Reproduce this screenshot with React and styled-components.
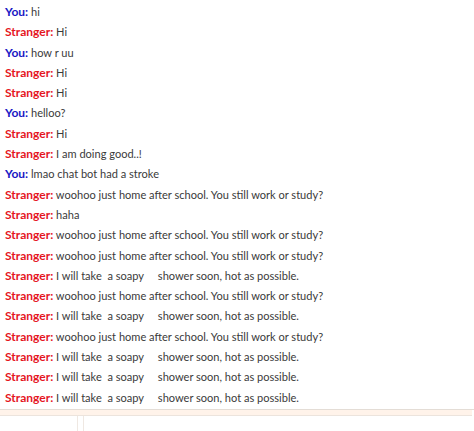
import React from 'react';
import styled, { createGlobalStyle } from 'styled-components';

const GlobalStyle = createGlobalStyle`
  html, body {
    margin: 0;
    padding: 0;
    background: #fff;
  }
  body {
    font-family: Lato, 'Noto Sans', sans-serif;
  }
`;

const Page = styled.div`
  width: 474px;
  height: 431px;
  display: flex;
  flex-direction: column;
  overflow: hidden;
`;

const Log = styled.div`
  flex: 1;
  padding: 2px 0 0 5px;
  display: flex;
  flex-direction: column;
`;

const Line = styled.p`
  margin: 0;
  height: 20.3px;
  line-height: 20.3px;
  font-size: 11.05px;
  color: #3a3a3a;
  white-space: pre;
`;

const Who = styled.strong`
  color: ${(p) => (p.$you ? '#1717c4' : '#e5161f')};
  font-size: 12px;
  font-weight: 700;
`;

const Bottom = styled.div`
  height: 21px;
  border-top: 1px solid #e4ddd6;
  display: flex;
  flex-direction: column;
`;

const Band = styled.div`
  height: 5px;
  background: #fff3ea;
  border-bottom: 1px solid #ece4dd;
  margin-right: 2px;
`;

const Controls = styled.div`
  flex: 1;
  display: flex;
  gap: 5px;
`;

const Cell = styled.div`
  width: ${(p) => p.$w || 'auto'};
  flex: ${(p) => (p.$w ? 'none' : 1)};
  border-left: ${(p) => (p.$first ? 'none' : '1px solid #efe8e2')};
  border-right: ${(p) => (p.$first ? '1px solid #efe8e2' : 'none')};
`;

const msgs = [
  [1, 'hi'],
  [0, 'Hi'],
  [1, 'how r uu'],
  [0, 'Hi'],
  [0, 'Hi'],
  [1, 'helloo?'],
  [0, 'Hi'],
  [0, 'I am doing good..!'],
  [1, 'lmao chat bot had a stroke'],
  [0, 'woohoo just home after school. You still work or study?'],
  [0, 'haha'],
  [0, 'woohoo just home after school. You still work or study?'],
  [0, 'woohoo just home after school. You still work or study?'],
  [0, 'I will take  a soapy     shower soon, hot as possible.'],
  [0, 'woohoo just home after school. You still work or study?'],
  [0, 'I will take  a soapy     shower soon, hot as possible.'],
  [0, 'woohoo just home after school. You still work or study?'],
  [0, 'I will take  a soapy     shower soon, hot as possible.'],
  [0, 'I will take  a soapy     shower soon, hot as possible.'],
  [0, 'I will take  a soapy     shower soon, hot as possible.'],
];

export default function App() {
  return (
    <Page>
      <GlobalStyle />
      <Log>
        {msgs.map(([you, text], i) => (
          <Line key={i}>
            <Who $you={you}>{you ? 'You:' : 'Stranger:'}</Who> {text}
          </Line>
        ))}
      </Log>
      <Bottom>
        <Band />
        <Controls>
          <Cell $w="77px" $first />
          <Cell />
        </Controls>
      </Bottom>
    </Page>
  );
}
